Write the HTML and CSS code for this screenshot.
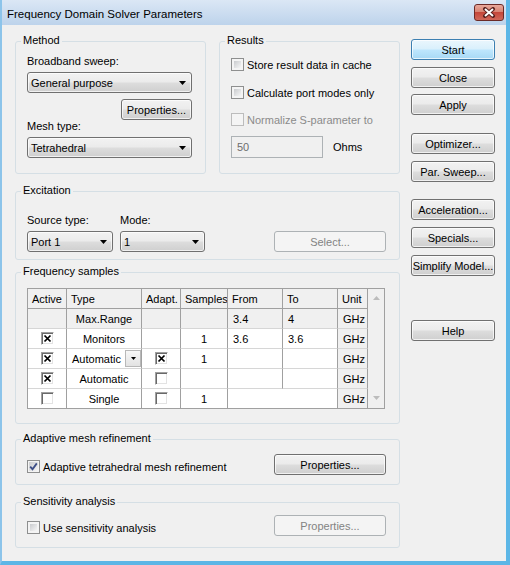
FILE: index.html
```html
<!DOCTYPE html>
<html lang="en">
<head>
    <meta charset="UTF-8">
    <title>Frequency Domain Solver Parameters</title>
    <link rel="stylesheet" href="styles.css">
</head>
<body>
    <div class="window">
        <div class="titlebar">
            <span class="title">Frequency Domain Solver Parameters</span>
            <div class="close-btn">
                <svg width="14" height="11" viewBox="0 0 14 11">
                    <path d="M3 2 L11 9 M11 2 L3 9" stroke="#5b2320" stroke-width="4" stroke-linecap="round"/>
                    <path d="M3 2 L11 9 M11 2 L3 9" stroke="#fff" stroke-width="2"/>
                </svg>
            </div>
        </div>

        <div class="client">
            <div class="main">
                <div class="top-row">
                    <div class="group method">
                        <div class="legend">Method</div>
                        <div class="field-label">Broadband sweep:</div>
                        <div class="combo"><span>General purpose</span><svg class="arrow" width="7" height="4" viewBox="0 0 7 4"><polygon points="0,0 7,0 3.5,4" fill="#000"/></svg></div>
                        <button class="btn props">Properties...</button>
                        <div class="field-label mesh-label">Mesh type:</div>
                        <div class="combo"><span>Tetrahedral</span><svg class="arrow" width="7" height="4" viewBox="0 0 7 4"><polygon points="0,0 7,0 3.5,4" fill="#000"/></svg></div>
                    </div>

                    <div class="group results">
                        <div class="legend">Results</div>
                        <div class="check-row r1"><span class="cb"></span>Store result data in cache</div>
                        <div class="check-row r2"><span class="cb"></span>Calculate port modes only</div>
                        <div class="check-row r3 disabled"><span class="cb"></span>Normalize S-parameter to</div>
                        <div class="ohms-row">
                            <div class="textbox">50</div>
                            <span class="ohms">Ohms</span>
                        </div>
                    </div>
                </div>

                <div class="group excitation">
                    <div class="legend">Excitation</div>
                    <div class="exc-row">
                        <div class="exc-col">
                            <div class="field-label">Source type:</div>
                            <div class="combo"><span>Port 1</span><svg class="arrow" width="7" height="4" viewBox="0 0 7 4"><polygon points="0,0 7,0 3.5,4" fill="#000"/></svg></div>
                        </div>
                        <div class="exc-col mode">
                            <div class="field-label">Mode:</div>
                            <div class="combo"><span>1</span><svg class="arrow" width="7" height="4" viewBox="0 0 7 4"><polygon points="0,0 7,0 3.5,4" fill="#000"/></svg></div>
                        </div>
                        <button class="btn wide-btn" disabled>Select...</button>
                    </div>
                </div>

                <div class="group samples">
                    <div class="legend">Frequency samples</div>
                    <div class="grid-wrap">
                        <div class="grid">
                            <div class="c h">Active</div>
                            <div class="c h">Type</div>
                            <div class="c h">Adapt.</div>
                            <div class="c h">Samples</div>
                            <div class="c h">From</div>
                            <div class="c h">To</div>
                            <div class="c h">Unit</div>

                            <div class="c gray"></div>
                            <div class="c gray center">Max.Range</div>
                            <div class="c gray"></div>
                            <div class="c gray"></div>
                            <div class="c gray">3.4</div>
                            <div class="c gray">4</div>
                            <div class="c gray">GHz</div>

                            <div class="c center"><span class="xcb"><svg width="11" height="11" viewBox="0 0 11 11"><path d="M2.5 2.5 L8.5 8.5 M8.5 2.5 L2.5 8.5" stroke="#000" stroke-width="1.7"/></svg></span></div>
                            <div class="c center">Monitors</div>
                            <div class="c"></div>
                            <div class="c center">1</div>
                            <div class="c">3.6</div>
                            <div class="c">3.6</div>
                            <div class="c gray">GHz</div>

                            <div class="c center"><span class="xcb"><svg width="11" height="11" viewBox="0 0 11 11"><path d="M2.5 2.5 L8.5 8.5 M8.5 2.5 L2.5 8.5" stroke="#000" stroke-width="1.7"/></svg></span></div>
                            <div class="c type-drop">Automatic<span class="drop-btn"><svg width="5" height="3" viewBox="0 0 5 3"><polygon points="0,0 5,0 2.5,3" fill="#000"/></svg></span></div>
                            <div class="c center"><span class="xcb"><svg width="11" height="11" viewBox="0 0 11 11"><path d="M2.5 2.5 L8.5 8.5 M8.5 2.5 L2.5 8.5" stroke="#000" stroke-width="1.7"/></svg></span></div>
                            <div class="c center">1</div>
                            <div class="c"></div>
                            <div class="c"></div>
                            <div class="c gray">GHz</div>

                            <div class="c center"><span class="xcb"><svg width="11" height="11" viewBox="0 0 11 11"><path d="M2.5 2.5 L8.5 8.5 M8.5 2.5 L2.5 8.5" stroke="#000" stroke-width="1.7"/></svg></span></div>
                            <div class="c center">Automatic</div>
                            <div class="c center"><span class="xcb"></span></div>
                            <div class="c"></div>
                            <div class="c"></div>
                            <div class="c"></div>
                            <div class="c gray">GHz</div>

                            <div class="c last center"><span class="xcb"></span></div>
                            <div class="c last center">Single</div>
                            <div class="c last center"><span class="xcb"></span></div>
                            <div class="c last center">1</div>
                            <div class="c last span2"></div>
                            <div class="c last gray">GHz</div>
                        </div>
                        <div class="vscroll">
                            <svg width="7" height="4" viewBox="0 0 7 4"><polygon points="3.5,0 7,4 0,4" fill="#bcbcbc"/></svg>
                            <svg width="7" height="4" viewBox="0 0 7 4"><polygon points="0,0 7,0 3.5,4" fill="#bcbcbc"/></svg>
                        </div>
                    </div>
                </div>

                <div class="group adaptive">
                    <div class="legend">Adaptive mesh refinement</div>
                    <div class="opt-row">
                        <div class="check-row"><span class="cb checked"><svg width="9" height="9" viewBox="0 0 9 9"><path d="M1.2 4.6 L3.5 7.2 L7.8 1.4" stroke="#3e4f87" stroke-width="1.8" fill="none"/></svg></span>Adaptive tetrahedral mesh refinement</div>
                        <button class="btn wide-btn">Properties...</button>
                    </div>
                </div>

                <div class="group sensitivity">
                    <div class="legend">Sensitivity analysis</div>
                    <div class="opt-row">
                        <div class="check-row"><span class="cb"></span>Use sensitivity analysis</div>
                        <button class="btn wide-btn" disabled>Properties...</button>
                    </div>
                </div>
            </div>

            <div class="side">
                <button class="btn default">Start</button>
                <button class="btn s-close">Close</button>
                <button class="btn s-apply">Apply</button>
                <button class="btn s-opt">Optimizer...</button>
                <button class="btn s-par">Par. Sweep...</button>
                <button class="btn s-acc">Acceleration...</button>
                <button class="btn s-spec">Specials...</button>
                <button class="btn s-simp">Simplify Model...</button>
                <button class="btn s-help">Help</button>
            </div>
        </div>
    </div>
</body>
</html>
```

FILE: styles.css
```css
body {
    margin: 0;
    font-family: "Liberation Sans", Arial, sans-serif;
    font-size: 11px;
    color: #000;
}
.window {
    width: 510px;
    height: 565px;
    box-sizing: border-box;
    background-color: #f0f0f0;
    border-left: 2px solid #8cc4ea;
    border-right: 4px solid #5cb6e6;
    border-bottom: 4px solid #5cb6e6;
    display: flex;
    flex-direction: column;
}
.titlebar {
    height: 25px;
    flex-shrink: 0;
    display: flex;
    align-items: flex-start;
    padding-left: 5px;
    background: linear-gradient(#dbe7f5, #bdd3eb);
}
.title {
    font-size: 11.5px;
    line-height: 13px;
    margin-top: 8px;
}
.close-btn {
    margin: 4px 2px 0 auto;
    width: 30px;
    height: 17px;
    box-sizing: border-box;
    border: 1px solid #6b2a26;
    border-radius: 3px;
    background: linear-gradient(#e9a99c, #d88574 45%, #c5473a 50%, #d0685a);
    display: flex;
    align-items: center;
    justify-content: center;
}
.client {
    flex: 1;
    display: flex;
    padding-left: 13px;
}
.main {
    width: 385px;
    padding-top: 16px;
}
.top-row {
    display: flex;
    gap: 13px;
}

/* group boxes */
.group {
    box-sizing: border-box;
    border: 1px solid #d5dfe5;
    border-radius: 3px;
    padding: 0 13px 0 11px;
}
.legend {
    display: table;
    margin: -8px 0 0 -6px;
    padding: 0 2px;
    line-height: 13px;
    background-color: #f0f0f0;
}
.field-label {
    line-height: 13px;
    margin-top: 8px;
}
.method {
    width: 191px;
    height: 133px;
}
.method .mesh-label {
    margin-top: 0;
}
.results {
    width: 181px;
    height: 133px;
}
.excitation {
    height: 69px;
    margin-top: 17px;
}
.samples {
    height: 152px;
    margin-top: 12px;
}
.adaptive {
    height: 46px;
    margin-top: 15px;
}
.sensitivity {
    height: 46px;
    margin-top: 17px;
}

/* buttons and combos */
.btn, .combo {
    box-sizing: border-box;
    height: 21px;
    border: 1px solid #707070;
    border-radius: 3px;
    background: linear-gradient(#f2f2f2, #ebebeb 48%, #dddddd 52%, #cfcfcf);
    box-shadow: inset 0 0 0 1px rgba(255, 255, 255, 0.7);
}
.btn {
    display: block;
    padding: 0;
    font: inherit;
    color: #000;
    text-align: center;
}
.btn:disabled {
    border-color: #adb2b5;
    background: #f4f4f4;
    box-shadow: none;
    color: #838383;
}
.btn.default {
    border-color: #3c7fb1;
    background: linear-gradient(#eaf6fd, #d9f0fc 48%, #bee6fd 52%, #a7d9f5);
}
.combo {
    margin-top: 4px;
    display: flex;
    align-items: center;
    justify-content: space-between;
    padding: 0 5px 0 3px;
}
.method .props {
    width: 71px;
    margin: 6px 0 0 auto;
}
.wide-btn {
    width: 112px;
    margin-left: auto;
}

/* checkboxes */
.check-row {
    display: flex;
    align-items: center;
    gap: 3px;
    height: 13px;
}
.cb {
    box-sizing: border-box;
    width: 13px;
    height: 13px;
    flex-shrink: 0;
    border: 1px solid #8e8f8f;
    padding: 2px;
    background: linear-gradient(135deg, #c9cbce, #f6f6f6) content-box, #f4f4f4;
}
.cb.checked {
    padding: 1px;
    display: flex;
    align-items: center;
    justify-content: center;
}
.disabled {
    color: #8b8b8b;
}
.disabled .cb {
    border-color: #bcbcbc;
    background: #f4f4f4;
}
.results .r1 {
    margin-top: 11px;
}
.results .r2 {
    margin-top: 15px;
}
.results .r3 {
    margin-top: 14px;
}
.ohms-row {
    display: flex;
    align-items: center;
    margin-top: 10px;
}
.textbox {
    box-sizing: border-box;
    width: 92px;
    height: 22px;
    border: 1px solid #adb2b5;
    padding-left: 5px;
    line-height: 20px;
    color: #6d6d6d;
}
.ohms {
    margin-left: 10px;
}

/* excitation */
.exc-row {
    display: flex;
    align-items: flex-end;
    margin-top: 9px;
}
.exc-col {
    width: 86px;
}
.exc-col.mode {
    width: 85px;
    margin-left: 7px;
}

/* frequency grid */
.grid-wrap {
    display: flex;
    width: 358px;
    box-sizing: border-box;
    margin-top: 10px;
    border: 1px solid #a0a0a0;
}
.grid {
    display: grid;
    grid-template-columns: 39px 75px 39px 47px 55px 55px 30px;
    grid-template-rows: repeat(5, 20px) 19px;
}
.c {
    box-sizing: border-box;
    display: flex;
    align-items: center;
    padding: 0 3px 0 5px;
    white-space: nowrap;
    overflow: hidden;
    background-color: #fff;
    border-right: 1px solid #a0a0a0;
    border-bottom: 1px solid #d6d6d6;
}
.c.h {
    padding-left: 4px;
    background-color: #f0f0f0;
    border-bottom-color: #a0a0a0;
}
.c.gray {
    background-color: #f0f0f0;
}
.c.center {
    justify-content: center;
    padding: 0;
}
.c.last {
    border-bottom: 0;
}
.c.span2 {
    grid-column: span 2;
}
.type-drop {
    justify-content: space-between;
    padding-right: 0;
}
.drop-btn {
    box-sizing: border-box;
    width: 16px;
    height: 17px;
    border: 1px solid #b8b8b8;
    background: linear-gradient(#f8f8f8, #e2e2e2);
    display: flex;
    align-items: center;
    justify-content: center;
}
.xcb {
    box-sizing: border-box;
    width: 13px;
    height: 13px;
    border: 1px solid;
    border-color: #a0a0a0 #fff #fff #a0a0a0;
    box-shadow: inset 1px 1px #696969, inset -1px -1px #e3e3e3;
    background-color: #fff;
    display: flex;
}
.vscroll {
    width: 16px;
    display: flex;
    flex-direction: column;
    justify-content: space-between;
    align-items: center;
    padding: 7px 0 8px;
    box-sizing: border-box;
    background-color: #f0f0f0;
}

/* adaptive / sensitivity rows */
.opt-row {
    display: flex;
    align-items: center;
    margin-top: 9px;
}
.sensitivity .opt-row {
    margin-top: 7px;
}
.opt-row .check-row {
    margin-top: 4px;
}

/* side buttons */
.side {
    width: 84px;
    margin-left: 11px;
    padding-top: 14px;
    display: flex;
    flex-direction: column;
}
.side .s-close { margin-top: 7px; }
.side .s-apply { margin-top: 6px; }
.side .s-opt { margin-top: 18px; }
.side .s-par { margin-top: 7px; }
.side .s-acc { margin-top: 17px; }
.side .s-spec { margin-top: 7px; }
.side .s-simp { margin-top: 7px; }
.side .s-help { margin-top: 44px; }
```
